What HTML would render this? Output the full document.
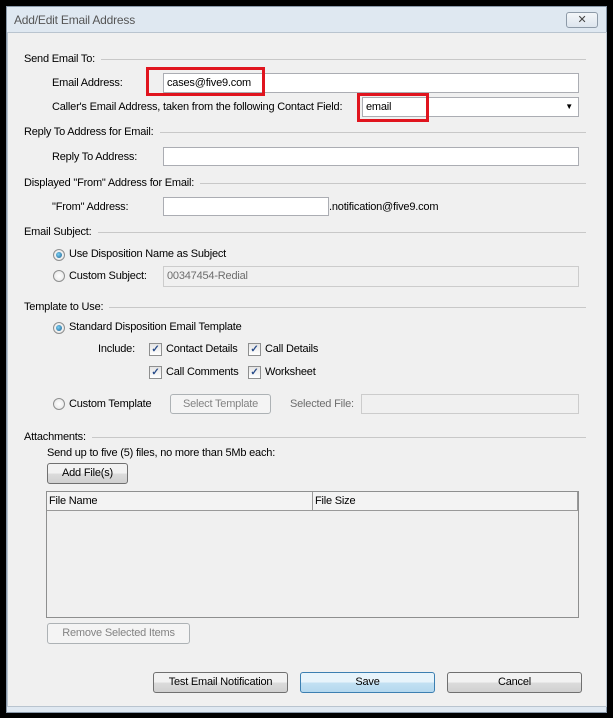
<!DOCTYPE html>
<html><head><style>
*{box-sizing:border-box;margin:0;padding:0}
body{width:613px;height:718px;background:#000;position:relative;overflow:hidden;font-family:"Liberation Sans",sans-serif;font-size:11px;letter-spacing:-0.2px;color:#000}
.win{position:absolute;left:6px;top:6px;width:601px;height:707px;background:#dfe8f1;border:1px solid #8a99aa}
.close{position:absolute;width:32px;height:16px;border:1px solid #8d9aa8;border-radius:3px;background:linear-gradient(#f3f6f9,#dde5ee);text-align:center;font-size:11px;line-height:14px;color:#444}
.body{position:absolute;left:7px;top:32px;width:600px;height:675px;background:#f0f0f0;border:1px solid #b9c4cf}
.t{position:absolute;white-space:nowrap;line-height:13px}
.h{background:#f0f0f0;padding-right:6px;z-index:2}
.hl{position:absolute;height:1px;background:#c8c8c8;left:24px;width:562px}
.in{position:absolute;background:#fff;border:1px solid #abadb3;padding-left:3px;line-height:18px}
.dis{background:#f0f0f0;border-color:#ccc;color:#6d6d6d}
.red{position:absolute;border:3px solid #e0141e}
.rad{position:absolute;width:12px;height:12px;border-radius:50%;border:1px solid #8e8f8f;background:radial-gradient(#fff,#e3e3e3)}
.rad.on::after{content:"";position:absolute;left:2px;top:2px;width:6px;height:6px;border-radius:50%;background:radial-gradient(circle at 40% 40%,#7ad0f5,#1c5e8c)}
.cb{position:absolute;width:13px;height:13px;border:1px solid #8e8f8f;background:linear-gradient(#e5e5e5,#fff);font-size:10px;line-height:11px;text-align:center;color:#2a4d8a;font-weight:bold}
.btn{position:absolute;border:1px solid #707070;border-radius:3px;background:linear-gradient(#f2f2f2 50%,#dcdcdc 50%,#d0d0d0);text-align:center;line-height:19px;font-size:11px}
.btn.d{border-color:#adb2b5;background:#f4f4f4;color:#838383}
</style></head><body>
<div class="win"></div>
<div class="t" style="left:14px;top:14px;color:#555;font-size:12px">Add/Edit Email Address</div>
<div class="close" style="left:566px;top:12px">✕</div>
<div class="body"></div>

<div class="hl" style="top:59px"></div><div class="t h" style="left:24px;top:53px">Send Email To:</div>
<div class="t" style="left:52px;top:77px">Email Address:</div>
<div class="in" style="left:163px;top:73px;width:416px;height:20px">cases@five9.com</div>
<div class="red" style="left:146px;top:67px;width:119px;height:29px"></div>
<div class="t" style="left:52px;top:101px">Caller's Email Address, taken from the following Contact Field:</div>
<div class="in" style="left:362px;top:97px;width:217px;height:20px">email<span style="position:absolute;right:5px;top:0;font-size:8px">▼</span></div>
<div class="red" style="left:357px;top:93px;width:72px;height:29px"></div>

<div class="hl" style="top:132px"></div><div class="t h" style="left:24px;top:126px">Reply To Address for Email:</div>
<div class="t" style="left:52px;top:151px">Reply To Address:</div>
<div class="in" style="left:163px;top:147px;width:416px;height:19px"></div>

<div class="hl" style="top:183px"></div><div class="t h" style="left:24px;top:177px">Displayed "From" Address for Email:</div>
<div class="t" style="left:52px;top:201px">"From" Address:</div>
<div class="in" style="left:163px;top:197px;width:166px;height:19px"></div>
<div class="t" style="left:329px;top:201px">.notification@five9.com</div>

<div class="hl" style="top:232px"></div><div class="t h" style="left:24px;top:226px">Email Subject:</div>
<div class="rad on" style="left:53px;top:249px"></div><div class="t" style="left:69px;top:248px">Use Disposition Name as Subject</div>
<div class="rad" style="left:53px;top:270px"></div><div class="t" style="left:69px;top:270px">Custom Subject:</div>
<div class="in dis" style="left:163px;top:266px;width:416px;height:21px">00347454-Redial</div>

<div class="hl" style="top:307px"></div><div class="t h" style="left:24px;top:301px">Template to Use:</div>
<div class="rad on" style="left:53px;top:322px"></div><div class="t" style="left:69px;top:321px">Standard Disposition Email Template</div>
<div class="t" style="left:98px;top:343px">Include:</div>
<div class="cb" style="left:149px;top:343px">✓</div><div class="t" style="left:166px;top:343px">Contact Details</div>
<div class="cb" style="left:248px;top:343px">✓</div><div class="t" style="left:265px;top:343px">Call Details</div>
<div class="cb" style="left:149px;top:366px">✓</div><div class="t" style="left:166px;top:366px">Call Comments</div>
<div class="cb" style="left:248px;top:366px">✓</div><div class="t" style="left:265px;top:366px">Worksheet</div>
<div class="rad" style="left:53px;top:398px"></div><div class="t" style="left:69px;top:398px">Custom Template</div>
<div class="btn d" style="left:170px;top:394px;width:101px;height:20px">Select Template</div>
<div class="t" style="left:290px;top:398px;color:#6d6d6d">Selected File:</div>
<div class="in dis" style="left:361px;top:394px;width:218px;height:20px"></div>

<div class="hl" style="top:437px"></div><div class="t h" style="left:24px;top:431px">Attachments:</div>
<div class="t" style="left:47px;top:447px">Send up to five (5) files, no more than 5Mb each:</div>
<div class="btn" style="left:47px;top:463px;width:81px;height:21px">Add File(s)</div>
<div style="position:absolute;left:46px;top:491px;width:533px;height:127px;border:1px solid #8e8f8f;background:#f0f0f0"></div>
<div style="position:absolute;left:47px;top:492px;width:531px;height:19px;background:#f3f3f3;border-bottom:1px solid #999"></div>
<div style="position:absolute;left:312px;top:492px;width:1px;height:19px;background:#999"></div>
<div style="position:absolute;left:577px;top:492px;width:1px;height:19px;background:#999"></div>
<div class="t" style="left:49px;top:495px">File Name</div>
<div class="t" style="left:315px;top:495px">File Size</div>
<div class="btn d" style="left:47px;top:623px;width:143px;height:21px">Remove Selected Items</div>

<div class="btn" style="left:153px;top:672px;width:135px;height:21px">Test Email Notification</div>
<div class="btn" style="left:300px;top:672px;width:135px;height:21px;border-color:#3c7fb1;background:linear-gradient(#e8f4fb 50%,#c3e1f3 50%,#b4d8ee)">Save</div>
<div class="btn" style="left:447px;top:672px;width:135px;height:21px">Cancel</div>
</body></html>
